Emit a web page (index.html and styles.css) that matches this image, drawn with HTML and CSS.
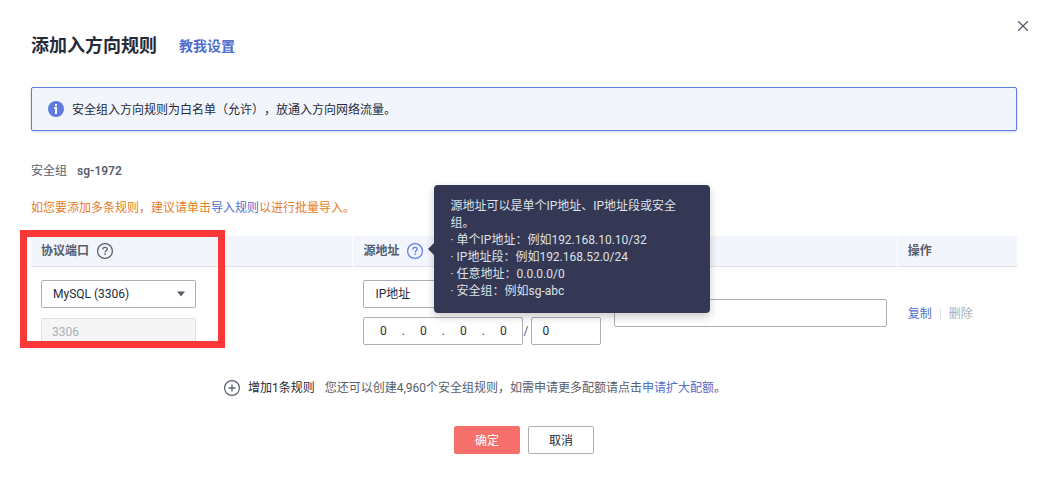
FILE: index.html
```html
<!DOCTYPE html>
<html lang="zh-CN">
<head>
<meta charset="utf-8">
<meta name="viewport" content="width=device-width, initial-scale=1">
<title>添加入方向规则</title>
<link rel="stylesheet" href="styles.css">
</head>
<body>
<main class="dialog">
  <button class="close" type="button" aria-label="关闭">
    <svg width="12" height="12" viewBox="0 0 12 12" aria-hidden="true"><path d="M1.2 1.2l9.6 9.6M10.8 1.2l-9.6 9.6" fill="none" stroke="currentColor" stroke-width="1.3"/></svg>
  </button>
  <header class="dialog-head">
    <h1 class="title">添加入方向规则</h1>
    <a class="guide link" href="#">教我设置</a>
  </header>

  <div class="notice">
    <svg class="icon" width="16" height="16" viewBox="0 0 16 16" aria-hidden="true"><circle cx="8" cy="8" r="8" fill="#5e7ce0"/><path d="M7 3h2v2H7zM6 6h3v7H7V7.5H6z" fill="#fff"/></svg>
    <span class="notice-text">安全组入方向规则为白名单（允许），放通入方向网络流量。</span>
  </div>

  <p class="group"><span>安全组</span><strong>sg-1972</strong></p>
  <p class="hint">如您要添加多条规则，建议请单击<a class="link" href="#">导入规则</a>以进行批量导入。</p>

  <div class="rules">
    <table class="table">
      <colgroup><col class="col-port"><col class="col-source"><col class="col-desc"><col class="col-action"></colgroup>
      <thead>
        <tr>
          <th scope="col"><div class="head-cell">协议端口
            <button class="help" type="button" aria-label="协议端口说明"><svg class="icon" width="16" height="16" viewBox="0 0 16 16" aria-hidden="true"><circle cx="8" cy="8" r="7.4" fill="none" stroke="currentColor" stroke-width="1.2"/><path d="M5.8 6.4c0-1.3 1-2.1 2.2-2.1s2.2.8 2.2 2c0 1.6-2.1 1.5-2.1 3.2" fill="none" stroke="currentColor" stroke-width="1.3"/><path d="M7.4 10.6h1.4V12H7.4z" fill="currentColor"/></svg></button></div></th>
          <th scope="col"><div class="head-cell">源地址
            <span class="help-wrap">
              <button class="help help-active" type="button" aria-label="源地址说明" aria-describedby="source-tip"><svg class="icon" width="16" height="16" viewBox="0 0 16 16" aria-hidden="true"><circle cx="8" cy="8" r="7.4" fill="none" stroke="currentColor" stroke-width="1.2"/><path d="M5.8 6.4c0-1.3 1-2.1 2.2-2.1s2.2.8 2.2 2c0 1.6-2.1 1.5-2.1 3.2" fill="none" stroke="currentColor" stroke-width="1.3"/><path d="M7.4 10.6h1.4V12H7.4z" fill="currentColor"/></svg></button>
              <span class="tooltip" id="source-tip" role="tooltip">源地址可以是单个IP地址、IP地址段或安全组。<br>· 单个IP地址：例如192.168.10.10/32<br>· IP地址段：例如192.168.52.0/24<br>· 任意地址：0.0.0.0/0<br>· 安全组：例如sg-abc</span>
            </span></div></th>
          <th scope="col" aria-label="描述"></th>
          <th scope="col"><div class="head-cell">操作</div></th>
        </tr>
      </thead>
      <tbody>
        <tr>
          <td>
            <div class="stack stack-port">
              <div class="select-wrap">
                <select class="field" aria-label="协议"><option>MySQL (3306)</option></select>
                <svg class="caret" width="10" height="6" viewBox="0 0 10 6" aria-hidden="true"><path d="M1 .5h8L5 5.5z" fill="currentColor"/></svg>
              </div>
              <input class="field" type="text" value="3306" aria-label="端口" disabled>
            </div>
          </td>
          <td class="source-cell">
            <div class="stack">
              <div class="select-wrap">
                <select class="field" aria-label="源地址类型"><option>IP地址</option></select>
                <svg class="caret" width="10" height="6" viewBox="0 0 10 6" aria-hidden="true"><path d="M1 .5h8L5 5.5z" fill="currentColor"/></svg>
              </div>
              <div class="cidr">
                <div class="ip">
                  <input class="octet" type="text" value="0" aria-label="第1段"><span class="dot">.</span>
                  <input class="octet" type="text" value="0" aria-label="第2段"><span class="dot">.</span>
                  <input class="octet" type="text" value="0" aria-label="第3段"><span class="dot">.</span>
                  <input class="octet" type="text" value="0" aria-label="第4段">
                </div>
                <span class="slash">/</span>
                <input class="field mask" type="text" value="0" aria-label="掩码">
              </div>
            </div>
          </td>
          <td><input class="field" type="text" aria-label="描述"></td>
          <td><div class="actions"><a class="link" href="#">复制</a><button class="remove" type="button" disabled>删除</button></div></td>
        </tr>
      </tbody>
    </table>
    <div class="highlight"></div>
  </div>

  <div class="add-row">
    <button class="add" type="button">
      <svg class="icon" width="16" height="16" viewBox="0 0 16 16" aria-hidden="true"><circle cx="8" cy="8" r="7.4" fill="none" stroke="#575d6c" stroke-width="1.2"/><path d="M8 4.5v7M4.5 8h7" stroke="#575d6c" stroke-width="1.3"/></svg>
      增加1条规则
    </button>
    <span>您还可以创建4,960个安全组规则，如需申请更多配额请点击<a class="link" href="#">申请扩大配额</a>。</span>
  </div>

  <footer class="buttons">
    <button class="btn btn-primary" type="button">确定</button>
    <button class="btn" type="button">取消</button>
  </footer>
</main>
</body>
</html>
```

FILE: styles.css
```css
* { box-sizing: border-box; }

body {
  margin: 0;
  background: #fff;
  color: #575d6c;
  font: 12px/18px Roboto, "Noto Sans CJK SC", sans-serif;
  text-spacing-trim: space-all;
}

button, input, select { font: inherit; color: inherit; }
button { padding: 0; border: 0; background: none; cursor: pointer; }
.link { color: #526ecc; text-decoration: none; }
.icon { display: block; flex: none; }

.dialog { position: relative; padding: 32px 31px 31px; }

.close {
  position: absolute;
  top: 20px;
  right: 19px;
  display: flex;
}

.dialog-head { display: flex; align-items: center; gap: 22px; height: 28px; }
.title { margin: 0; font-size: 18px; line-height: 28px; font-weight: 700; color: #252b3a; }
.guide { font-size: 14px; line-height: 20px; font-weight: 700; }

.notice {
  display: flex;
  align-items: center;
  gap: 8px;
  margin-top: 27px;
  padding: 11px 16px;
  min-height: 44px;
  border: 1px solid #5e7ce0;
  border-radius: 2px;
  background: #f2f5fc;
  box-shadow: 0 1px 3px rgba(94, 124, 224, .3);
  color: #252b3a;
}
.notice-text { padding-top: 2px; }

.group { display: flex; gap: 10px; margin: 31px 0 0; }
.group strong { font-weight: 600; }
.hint { margin: 19px 0; color: #e37d29; }

.rules { position: relative; }
.table { width: 100%; table-layout: fixed; border-collapse: separate; border-spacing: 0; }
.col-port { width: 32.6%; }
.col-source { width: 25.4%; }
.col-desc { width: 29.8%; }
.col-action { width: 12.2%; }

.table th {
  height: 31px;
  padding: 0 10px;
  border-bottom: 1px solid #dfe1e6;
  background: #f2f5fc;
  text-align: left;
  font-weight: 700;
}
.table th + th { border-left: 1px solid #fff; }
.table td { padding: 13px 10px; vertical-align: middle; }
.table td + td { border-left: 1px solid transparent; }
.table .source-cell { padding-right: 0; vertical-align: top; }

.head-cell { display: flex; align-items: center; gap: 8px; }
.help { display: block; color: #575d6c; }
.help-active { color: #5e7ce0; }
.help-wrap { position: relative; }

.tooltip {
  position: absolute;
  z-index: 2;
  top: 50%;
  left: 100%;
  width: 276px;
  margin: -66px 0 0 11px;
  padding: 13px 16px;
  border-radius: 4px;
  background: #343854;
  box-shadow: 0 4px 8px rgba(0, 0, 0, .2);
  color: #dfe1e6;
  font-weight: 400;
  line-height: 17px;
}
.tooltip::before {
  content: "";
  position: absolute;
  top: 50%;
  left: -6px;
  margin-top: -6px;
  border: solid transparent;
  border-width: 6px 6px 6px 0;
  border-right-color: #343854;
}

.stack { display: flex; flex-direction: column; gap: 9px; }
.stack-port { width: 155px; gap: 10px; }

.field {
  display: block;
  width: 100%;
  height: 28px;
  padding: 0 10px;
  border: 1px solid #adb0b8;
  border-radius: 2px;
  background: #fff;
  color: #252b3a;
  appearance: none;
}
.field:disabled { border-color: #dfe1e6; background: #f5f5f6; color: #adb0b8; }
select.field { padding: 0 24px 0 11px; }
.select-wrap { position: relative; }
.caret { position: absolute; top: 11px; right: 10px; color: #575d6c; pointer-events: none; }

.cidr { display: flex; align-items: center; }
.ip {
  display: flex;
  flex: none;
  align-items: center;
  width: 160px;
  height: 28px;
  padding: 0 1px;
  border: 1px solid #adb0b8;
  border-radius: 2px;
  color: #252b3a;
}
.octet {
  flex: 1;
  min-width: 0;
  padding: 0;
  border: 0;
  background: none;
  text-align: center;
}
.dot { width: 4px; text-align: center; }
.slash { flex: none; width: 8px; }
.mask { width: 70px; }

.actions { display: flex; align-items: center; padding-top: 2px; }
.remove { margin-left: 8px; color: #adb0b8; cursor: default; }
.remove::before {
  content: "";
  display: inline-block;
  height: 12px;
  margin-right: 8px;
  border-left: 1px solid #dfe1e6;
  vertical-align: -2px;
}

.highlight {
  position: absolute;
  z-index: 1;
  top: -6px;
  left: -11px;
  width: 205px;
  height: 118px;
  border: 7px solid #fa3838;
  pointer-events: none;
}

.add-row { display: flex; align-items: center; gap: 10px; margin-top: 20px; padding-left: 193px; }
.add { display: flex; align-items: center; gap: 8px; color: #252b3a; }

.buttons { display: flex; justify-content: center; gap: 8px; margin-top: 29px; }
.btn {
  width: 66px;
  height: 28px;
  padding-top: 2px;
  border: 1px solid #adb0b8;
  border-radius: 2px;
  background: #fff;
  color: #252b3a;
}
.btn-primary { border-color: #f66f6a; background: #f66f6a; color: #fff; }
```
